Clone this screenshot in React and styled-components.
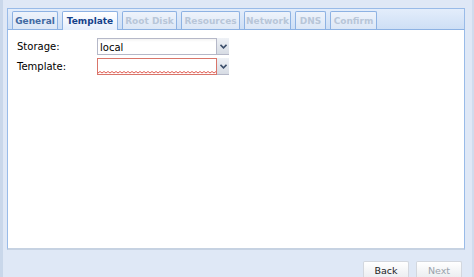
import React from "react";
import styled, { createGlobalStyle } from "styled-components";

const Global = createGlobalStyle`
  html, body { margin: 0; padding: 0; }
  body {
    width: 474px; height: 277px; overflow: hidden;
    background: #dfe8f6;
    font-family: "DejaVu Sans", Verdana, sans-serif;
  }
`;

const Window = styled.div`
  width: 474px; height: 277px;
  box-sizing: border-box;
  display: flex; flex-direction: column;
  padding: 8px 7px 0 4px;
  border-left: 3px solid #c9d7ea;
  border-right: 2px solid #d0dcee;
`;

const Panel = styled.div`
  display: flex; flex-direction: column;
  height: 246px;
`;

const TabStrip = styled.div`
  height: 22px;
  box-sizing: border-box;
  border: 1px solid #99bbe8;
  border-bottom: 1px solid #8db2e3;
  background: linear-gradient(#e3edfb, #cedff5);
  display: flex; align-items: flex-end; gap: 4px;
  padding: 0 0 0 4px;
`;

const Tab = styled.div`
  height: ${p => (p.$active ? "19px" : "18px")};
  width: ${p => p.$w}px;
  box-sizing: border-box;
  display: flex; align-items: center; justify-content: center;
  border: 1px solid #8db2e3;
  border-bottom: none;
  border-radius: 2px 2px 0 0;
  margin-bottom: ${p => (p.$active ? "-1px" : "0")};
  background: ${p => (p.$active ? "linear-gradient(#ffffff, #e4eefc)" : "linear-gradient(#eef3fb, #dce7f6)")};
  color: ${p => (p.$active ? "#15428b" : p.$disabled ? "#b8c6d8" : "#416aa3")};
  font-size: 9px; font-weight: bold;
  white-space: nowrap;
`;

const Body = styled.div`
  flex: 1;
  background: #fff;
  border: 1px solid #99bbe8;
  border-top: none;
  border-bottom: 2px solid #c6d2e2;
  padding: 8px 0 0 9px;
  display: flex; flex-direction: column; gap: 3px;
`;

const Row = styled.div`
  display: flex; align-items: center; height: 17px;
`;

const Label = styled.div`
  width: 80px;
  font-size: 10px; color: #000;
`;

const Combo = styled.div`
  display: flex; height: 17px;
`;

const Input = styled.div`
  width: 120px; height: 17px; box-sizing: border-box;
  border: 1px solid ${p => (p.$invalid ? "#d9756a" : "#b5b8c8")};
  background: ${p => p.$invalid
    ? "#fff"
    : "linear-gradient(#f3f3f3 0, #fff 3px, #fff)"};
  font-size: 10px; padding: 1px 2px 0;
  display: flex; align-items: center;
  position: relative;
`;

const Wave = styled.svg`
  position: absolute; left: 0; bottom: 0;
`;

const Trigger = styled.div`
  width: 12px; height: 17px; box-sizing: border-box;
  background: linear-gradient(#eef1f6, #d7dce4);
  border-bottom: 1px solid #b5b8c8;
  display: flex; align-items: center; justify-content: center;
`;

const Footer = styled.div`
  display: flex; justify-content: flex-end; gap: 7px;
  padding: 11px 3px 0 0;
`;

const Button = styled.div`
  width: 46px; height: 16px; box-sizing: border-box;
  border: 1px solid #d3d7de;
  border-bottom: none;
  border-radius: 2px 2px 0 0;
  background: linear-gradient(#ffffff, #eceef1);
  color: ${p => (p.$disabled ? "#9aa3ad" : "#222")};
  font-size: 9.5px;
  display: flex; justify-content: center; padding-top: 3px;
`;

const Chevron = () => (
  <svg width="7" height="5" viewBox="0 0 7 5">
    <path d="M0.5 0.8 L3.5 3.8 L6.5 0.8" fill="none" stroke="#3d4f6b" strokeWidth="1.6" />
  </svg>
);

const tabs = [
  { t: "General", w: 46 },
  { t: "Template", w: 56, active: true },
  { t: "Root Disk", w: 55, disabled: true },
  { t: "Resources", w: 59, disabled: true },
  { t: "Network", w: 47, disabled: true },
  { t: "DNS", w: 31, disabled: true },
  { t: "Confirm", w: 47, disabled: true },
];

export default function App() {
  return (
    <>
      <Global />
      <Window>
        <Panel>
          <TabStrip>
            {tabs.map(x => (
              <Tab key={x.t} $w={x.w} $active={x.active} $disabled={x.disabled}>{x.t}</Tab>
            ))}
          </TabStrip>
          <Body>
            <Row>
              <Label>Storage:</Label>
              <Combo>
                <Input>local</Input>
                <Trigger><Chevron /></Trigger>
              </Combo>
            </Row>
            <Row>
              <Label>Template:</Label>
              <Combo>
                <Input $invalid>
                  <Wave width="118" height="3" viewBox="0 0 118 3">
                    <path d={Array.from({ length: 30 }, (_, i) => `M${i * 4} 2 L${i * 4 + 2} 0.5 L${i * 4 + 4} 2`).join(" ")} fill="none" stroke="#e05a4f" strokeWidth="1" />
                  </Wave>
                </Input>
                <Trigger><Chevron /></Trigger>
              </Combo>
            </Row>
          </Body>
        </Panel>
        <Footer>
          <Button>Back</Button>
          <Button $disabled>Next</Button>
        </Footer>
      </Window>
    </>
  );
}
